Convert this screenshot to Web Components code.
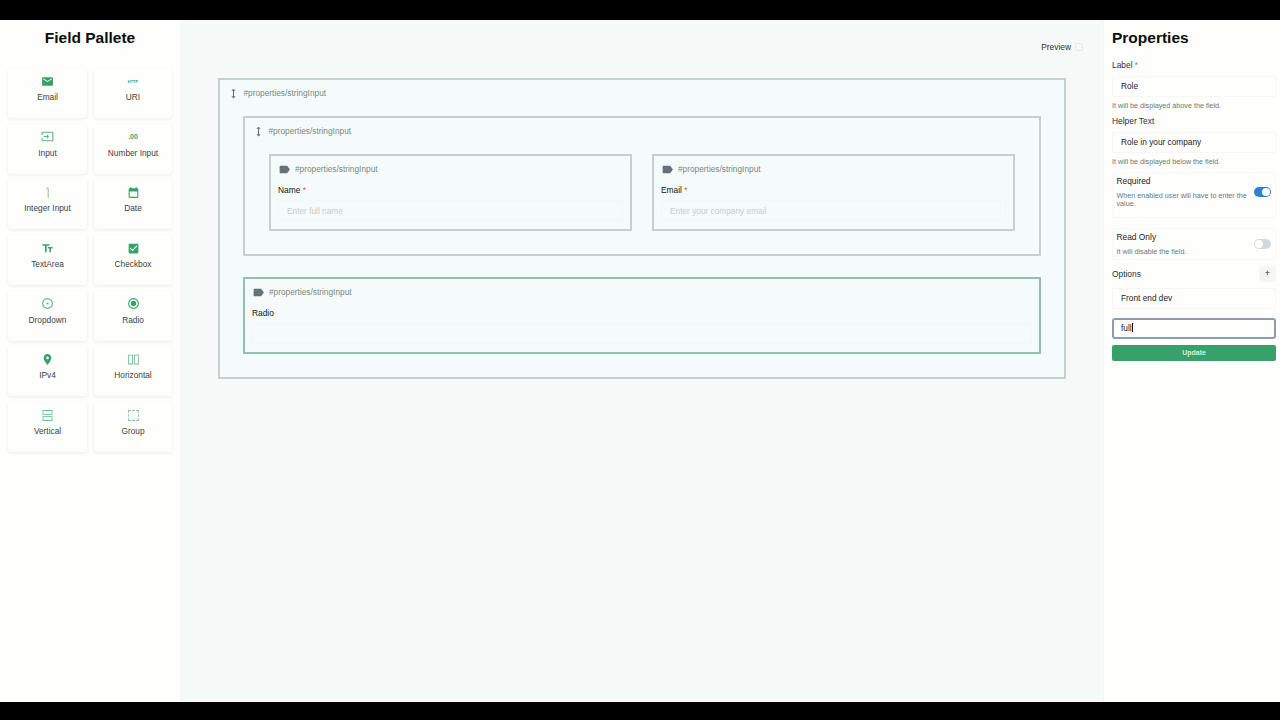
<!DOCTYPE html>
<html>
<head>
<meta charset="utf-8">
<title>Form builder</title>
<style>
  html, body { margin: 0; height: 720px; overflow: hidden; background: #000; }
  body { font-family: "Liberation Sans", Arial, sans-serif; }
</style>
</head>
<body>
<builder-app>
  <field-palette slot="left">
    <palette-card label="Email"><svg viewBox="0 0 24 24"><path d="M20 4H4c-1.1 0-2 .9-2 2v12c0 1.1.9 2 2 2h16c1.1 0 2-.9 2-2V6c0-1.1-.9-2-2-2zm0 4l-8 5-8-5V6l8 5 8-5v2z"/></svg></palette-card>
    <palette-card label="URI" glyph="HTTP" glyph-size="4"></palette-card>
    <palette-card label="Input"><svg style="fill:#5fb283" viewBox="0 0 24 24"><path d="M21 3.010H3c-1.100 0-2 .9-2 2V9h2V4.990h18v14.030H3V15H1v4.010c0 1.100.9 1.980 2 1.980h18c1.100 0 2-.88 2-1.980v-14c0-1.110-.9-2-2-2zM11 16l4-4-4-4v3H5v2h6v3z"/></svg></palette-card>
    <palette-card label="Number Input" glyph=".00" glyph-size="7"></palette-card>
    <palette-card label="Integer Input"><svg style="fill:#6fb98f" viewBox="0 0 24 24"><path d="M9 3h5v19h-1.600V4.600H9z"/></svg></palette-card>
    <palette-card label="Date"><svg viewBox="0 0 24 24"><path d="M19 4h-1V2h-2v2H8V2H6v2H5c-1.110 0-1.990.9-1.990 2L3 20c0 1.100.89 2 2 2h14c1.100 0 2-.9 2-2V6c0-1.100-.9-2-2-2zm0 16H5V10h14v10z"/></svg></palette-card>
    <palette-card label="TextArea"><svg viewBox="0 0 24 24"><path d="M2.500 4v3h5v12h3V7h5V4h-13zm19 5h-9v3h3v7h3v-7h3V9z"/></svg></palette-card>
    <palette-card label="Checkbox"><svg viewBox="0 0 24 24"><path d="M19 3H5c-1.110 0-2 .9-2 2v14c0 1.100.89 2 2 2h14c1.110 0 2-.9 2-2V5c0-1.100-.89-2-2-2zm-9 14l-5-5 1.410-1.410L10 14.170l7.590-7.590L19 8l-9 9z"/></svg></palette-card>
    <palette-card label="Dropdown"><svg style="fill:#5fb283" viewBox="0 0 24 24"><path d="M12 2a10 10 0 1 0 0 20 10 10 0 0 0 0-20zm0 18a8 8 0 1 1 0-16 8 8 0 0 1 0 16z"/><circle cx="12" cy="12" r="2"/></svg></palette-card>
    <palette-card label="Radio"><svg viewBox="0 0 24 24"><path d="M12 2a10 10 0 1 0 0 20 10 10 0 0 0 0-20zm0 18a8 8 0 1 1 0-16 8 8 0 0 1 0 16z"/><circle cx="12" cy="12" r="5"/></svg></palette-card>
    <palette-card label="IPv4"><svg viewBox="0 0 24 24"><path d="M12 2C8.130 2 5 5.130 5 9c0 5.250 7 13 7 13s7-7.750 7-13c0-3.870-3.130-7-7-7zm0 9.500c-1.380 0-2.500-1.120-2.500-2.500s1.120-2.500 2.500-2.500 2.500 1.120 2.500 2.500-1.120 2.500-2.500 2.500z"/></svg></palette-card>
    <palette-card label="Horizontal"><svg style="fill:#6fb98f" viewBox="0 0 24 24"><path d="M2 3h9v18H2V3zm1.500 1.500v15h6v-15h-6zM13 3h9v18h-9V3zm1.500 1.500v15h6v-15h-6z"/></svg></palette-card>
    <palette-card label="Vertical"><svg style="fill:#6fb98f" viewBox="0 0 24 24"><path d="M3 2h18v9H3V2zm1.500 1.500v6h15v-6h-15zM3 13h18v9H3v-9zm1.500 1.500v6h15v-6h-15z"/></svg></palette-card>
    <palette-card label="Group"><svg style="fill:#7fc09b" viewBox="0 0 24 24"><path d="M2 2h5v1.500H3.500V7H2V2zm7.500 0h5v1.500h-5V2zM17 2h5v5h-1.500V3.500H17V2zM2 9.500h1.500v5H2v-5zm18.500 0H22v5h-1.500v-5zM2 17h1.500v3.500H7V22H2v-5zm18.500 0H22v5h-5v-1.500h3.500V17zM9.500 20.500h5V22h-5v-1.500z"/></svg></palette-card>
  </field-palette>

  <form-canvas slot="center">
    <schema-box icon="height" style="--pad:23px">
      <schema-box icon="height" style="--pad:24px;--pad-b:23px">
        <div style="display:grid;grid-template-columns:363px 363px;gap:20px">
          <schema-box icon="label" leaf label="Name" required placeholder="Enter full name"></schema-box>
          <schema-box icon="label" leaf label="Email" required placeholder="Enter your company email"></schema-box>
        </div>
      </schema-box>
      <schema-box icon="label" leaf selected label="Radio"></schema-box>
    </schema-box>
  </form-canvas>

  <properties-panel slot="right"></properties-panel>
</builder-app>

<script>
const ICONS = {
  height: "M13 6.990h3L12 3 8 6.990h3v10.020H8L12 21l4-3.990h-3z",
  label: "M17.630 5.840C17.270 5.330 16.670 5 16 5L5 5.010C3.900 5.010 3 5.900 3 7v10c0 1.100.9 1.990 2 1.990L16 19c.67 0 1.270-.33 1.630-.84L22 12l-4.370-6.160z"
};

class BuilderApp extends HTMLElement {
  connectedCallback() {
    this.attachShadow({mode: "open"}).innerHTML = `
      <style>
        :host { display: grid; grid-template-rows: 20px 682px 18px; width: 1280px; height: 720px; background: #000; }
        .main { grid-row: 2; display: grid; grid-template-columns: 180px 923px 177px; min-height: 0; }
      </style>
      <div class="main">
        <slot name="left"></slot>
        <slot name="center"></slot>
        <slot name="right"></slot>
      </div>`;
  }
}

class FieldPalette extends HTMLElement {
  connectedCallback() {
    this.attachShadow({mode: "open"}).innerHTML = `
      <style>
        :host { display: block; background: #fefefd; padding: 0 8px; box-sizing: border-box; }
        h2 { margin: 0; height: 48px; line-height: 36px; text-align: center; font-size: 15.5px; color: #0c0c0c; }
        .grid { display: grid; grid-template-columns: 79px 78px; column-gap: 7px; row-gap: 5.7px; }
      </style>
      <h2>Field Pallete</h2>
      <div class="grid"><slot></slot></div>`;
  }
}

class PaletteCard extends HTMLElement {
  connectedCallback() {
    const glyph = this.getAttribute("glyph");
    const size = this.getAttribute("glyph-size");
    this.attachShadow({mode: "open"}).innerHTML = `
      <style>
        :host { display: flex; flex-direction: column; align-items: center; height: 50px; box-sizing: border-box;
          padding-top: 6.5px; background: #fefefd; border-radius: 3px; box-shadow: 0 1px 3px rgba(40,60,50,.09); }
        .icon { width: 13px; height: 13px; display: flex; align-items: center; justify-content: center; fill: #38a169; color: #38a169; }
        ::slotted(svg) { width: 13px; height: 13px; display: block; }
        .glyph { font-weight: bold; font-size: ${size}px; line-height: 13px; }
        .name { margin-top: 3.5px; font-size: 8.3px; line-height: 12px; color: #3a4343; }
      </style>
      <div class="icon">${glyph ? `<span class="glyph">${glyph}</span>` : `<slot></slot>`}</div>
      <div class="name">${this.getAttribute("label")}</div>`;
  }
}

class FormCanvas extends HTMLElement {
  connectedCallback() {
    this.attachShadow({mode: "open"}).innerHTML = `
      <style>
        :host { display: block; background: #f5faf9; padding: 20px 37px 0 38px; box-sizing: border-box; }
        .top { display: flex; justify-content: flex-end; align-items: center; gap: 4px; height: 14px; margin: 0 -17px 24px 0; font-size: 8.4px; color: #2c3534; }
        .check { width: 8px; height: 8px; border: 1px solid #e3e9e8; box-sizing: border-box; border-radius: 1px; }
      </style>
      <div class="top"><span>Preview</span><span class="check"></span></div>
      <slot></slot>`;
  }
}

class SchemaBox extends HTMLElement {
  connectedCallback() {
    const leaf = this.hasAttribute("leaf");
    const selected = this.hasAttribute("selected");
    const icon = this.getAttribute("icon");
    const label = this.getAttribute("label");
    const placeholder = this.getAttribute("placeholder");
    this.attachShadow({mode: "open"}).innerHTML = `
      <style>
        :host { display: block; box-sizing: border-box; border: 2px solid ${selected ? "#93c2a8" : "#c6d1cf"}; background: #f5fbfa; }
        .head { display: flex; align-items: center; gap: 4px; height: 26px; font-size: 8.3px; color: #7b8785; }
        .head svg { flex: none; width: 13px; height: 13px; fill: #66727a; }
        .head.tag { padding-left: 7px; }
        .head.arrow { padding-left: 6.5px; }
        .body { display: flex; flex-direction: column; gap: 21px; padding: 10px var(--pad) var(--pad-b, var(--pad)); }
        .lab { font-size: 8.4px; line-height: 12px; color: #111; margin: 2px 0 0 7px; }
        .lab b { font-weight: normal; color: #e0463f; }
        .inp { height: 21px; margin: 4px 7px 8px; box-sizing: border-box; padding-left: 8px; line-height: 20px;
          font-size: 8.3px; color: #c4cfcd; border: 1px solid #f2f8f7; border-radius: 2px; }
      </style>
      <div class="head ${leaf ? "tag" : "arrow"}">
        <svg viewBox="0 0 24 24"><path d="${ICONS[icon]}"/></svg>
        <span>#properties/stringInput</span>
      </div>
      ${leaf
        ? `<div class="lab">${label}${this.hasAttribute("required") ? " <b>*</b>" : ""}</div>
           <div class="inp">${placeholder || ""}</div>`
        : `<div class="body"><slot></slot></div>`}`;
  }
}

class PropField extends HTMLElement {
  connectedCallback() {
    const focus = this.hasAttribute("focused");
    this.attachShadow({mode: "open"}).innerHTML = `
      <style>
        :host { display: block; box-sizing: border-box; height: 21px; padding-left: 8px; line-height: 19px; font-size: 8.3px; color: #222;
          background: #fefefd; border-radius: 2px; border: 1px solid #f5f6f5; }
        :host([focused]) { border: 2px solid #8f9cab; border-radius: 3px; padding-left: 7px; line-height: 17px; }
        i { display: inline-block; width: 1px; height: 9px; background: #111; vertical-align: -1px; }
      </style>
      <slot></slot>${focus ? "<i></i>" : ""}`;
  }
}

class PropToggle extends HTMLElement {
  connectedCallback() {
    const on = this.hasAttribute("on");
    this.attachShadow({mode: "open"}).innerHTML = `
      <style>
        :host { display: flex; align-items: center; box-sizing: border-box; padding: 3px 4px 3px 3.5px; border: 1px solid #f7f8f7; border-radius: 2px; }
        .text { flex: 1; min-width: 0; align-self: flex-start; }
        .title { font-size: 8.4px; line-height: 11px; color: #222; }
        .desc { margin-top: 5px; font-size: 7.2px; line-height: 8px; color: #6b7675; }
        .sw { flex: none; width: 17px; height: 10px; border-radius: 5px; margin: ${on ? "-6px" : "0"} 0 0 4px; position: relative;
          background: ${on ? "#3182ce" : "#d3d8d8"}; }
        .sw::after { content: ""; position: absolute; top: 1px; ${on ? "right" : "left"}: 1px; width: 8px; height: 8px; border-radius: 50%; background: #fff; }
      </style>
      <div class="text">
        <div class="title">${this.getAttribute("label")}</div>
        <div class="desc">${this.getAttribute("desc")}</div>
      </div>
      <div class="sw"></div>`;
  }
}

class PropertiesPanel extends HTMLElement {
  connectedCallback() {
    this.attachShadow({mode: "open"}).innerHTML = `
      <style>
        :host { display: block; background: #fefefd; box-sizing: border-box; padding: 0 4px 0 8px; border-left: 1px solid #f1f4f3; font-size: 8.4px; }
        h2 { margin: 0; height: 38px; line-height: 36px; font-size: 15.5px; color: #0c0c0c; }
        .lab { height: 18px; line-height: 15px; color: #2b3232; }
        .lab b { font-weight: normal; color: #d9534f; }
        .help { height: 17px; line-height: 17px; font-size: 7.2px; color: #6b7675; }
        .opts { display: flex; justify-content: space-between; align-items: center; height: 16px; margin: 6px 0; color: #2b3232; }
        .plus { width: 17px; height: 16px; line-height: 15px; text-align: center; background: #f3f6f5; border-radius: 2px; font-size: 9px; }
        .update { margin-top: 6px; height: 16px; line-height: 16px; text-align: center; border-radius: 2px;
          background: #38a169; color: #d5efe0; font-size: 7px; font-weight: bold; }
      </style>
      <h2>Properties</h2>
      <div class="lab">Label <b>*</b></div>
      <prop-field>Role</prop-field>
      <div class="help">It will be displayed above the field.</div>
      <div class="lab">Helper Text</div>
      <prop-field>Role in your company</prop-field>
      <div class="help" style="height:19px">It will be displayed below the field.</div>
      <prop-toggle on label="Required" desc="When enabled user will have to enter the value." style="height:46px;margin-bottom:10px"></prop-toggle>
      <prop-toggle label="Read Only" desc="It will disable the field." style="height:32px"></prop-toggle>
      <div class="opts"><span>Options</span><span class="plus">+</span></div>
      <prop-field>Front end dev</prop-field>
      <prop-field focused style="margin-top:9px">full</prop-field>
      <div class="update">Update</div>`;
  }
}

customElements.define("prop-field", PropField);
customElements.define("prop-toggle", PropToggle);
customElements.define("palette-card", PaletteCard);
customElements.define("field-palette", FieldPalette);
customElements.define("schema-box", SchemaBox);
customElements.define("form-canvas", FormCanvas);
customElements.define("properties-panel", PropertiesPanel);
customElements.define("builder-app", BuilderApp);
</script>
</body>
</html>
